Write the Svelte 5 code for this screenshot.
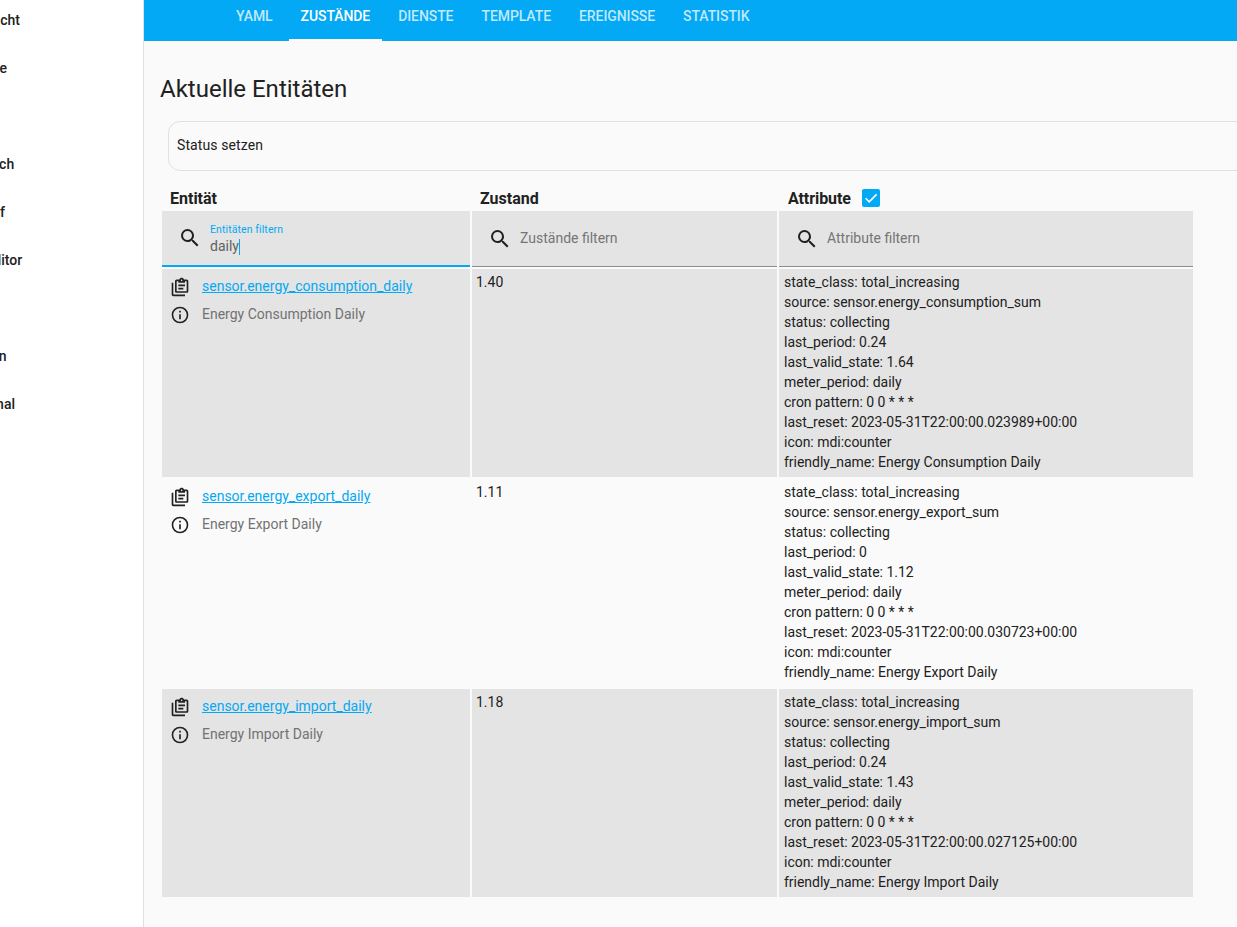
<script lang="ts">
  const navItems = ["Übersicht", "Energie", "", "Logbuch", "Verlauf", "File editor", "", "Medien", "Terminal"];
  const tabs = ["YAML", "Zustände", "Dienste", "Template", "Ereignisse", "Statistik"];

  const magnify = "M9.5,3A6.5,6.5 0 0,1 16,9.5C16,11.11 15.41,12.59 14.44,13.73L14.71,14H15.5L20.5,19L19,20.5L14,15.5V14.71L13.73,14.44C12.59,15.41 11.11,16 9.5,16A6.5,6.5 0 0,1 3,9.5A6.5,6.5 0 0,1 9.5,3M9.5,5C7,5 5,7 5,9.5C5,12 7,14 9.5,14C12,14 14,12 14,9.5C14,7 12,5 9.5,5Z";
  const clipboard = "M4 7V21H18V23H4C2.9 23 2 22.1 2 21V7H4M20 3C21.1 3 22 3.9 22 5V17C22 18.1 21.1 19 20 19H8C6.9 19 6 18.1 6 17V5C6 3.9 6.9 3 8 3H11.18C11.6 1.84 12.7 1 14 1C15.3 1 16.4 1.84 16.82 3H20M14 3C13.45 3 13 3.45 13 4C13 4.55 13.45 5 14 5C14.55 5 15 4.55 15 4C15 3.45 14.55 3 14 3M10 7V5H8V17H20V5H18V7H10M18 9H10V11H18V9M16 13H10V15H16V13Z";
  const info = "M11,9H13V7H11M12,20C7.59,20 4,16.41 4,12C4,7.59 7.59,4 12,4C16.41,4 20,7.59 20,12C20,16.41 16.41,20 12,20M12,2A10,10 0 0,0 2,12A10,10 0 0,0 12,22A10,10 0 0,0 22,12A10,10 0 0,0 12,2M11,17H13V11H11V17Z";

  const rows = [
    {
      id: "sensor.energy_consumption_daily",
      name: "Energy Consumption Daily",
      state: "1.40",
      source: "sensor.energy_consumption_sum",
      lastPeriod: "0.24",
      lastValid: "1.64",
      reset: "2023-05-31T22:00:00.023989+00:00",
    },
    {
      id: "sensor.energy_export_daily",
      name: "Energy Export Daily",
      state: "1.11",
      source: "sensor.energy_export_sum",
      lastPeriod: "0",
      lastValid: "1.12",
      reset: "2023-05-31T22:00:00.030723+00:00",
    },
    {
      id: "sensor.energy_import_daily",
      name: "Energy Import Daily",
      state: "1.18",
      source: "sensor.energy_import_sum",
      lastPeriod: "0.24",
      lastValid: "1.43",
      reset: "2023-05-31T22:00:00.027125+00:00",
    },
  ];

  const attributes = (r) => [
    "state_class: total_increasing",
    `source: ${r.source}`,
    "status: collecting",
    `last_period: ${r.lastPeriod}`,
    `last_valid_state: ${r.lastValid}`,
    "meter_period: daily",
    "cron pattern: 0 0 * * *",
    `last_reset: ${r.reset}`,
    "icon: mdi:counter",
    `friendly_name: ${r.name}`,
  ];
</script>

{#snippet icon(d, size = 24)}
  <svg viewBox="0 0 24 24" width={size} height={size}><path {d} /></svg>
{/snippet}

<div class="page">
  <nav class="sidebar">
    {#each navItems as item}
      <div class="nav-item">{item}</div>
    {/each}
  </nav>

  <main>
    <header>
      {#each tabs as tab, i}
        <div class="tab" class:active={i === 1}>{tab}</div>
      {/each}
    </header>

    <section>
      <h1>Aktuelle Entitäten</h1>
      <div class="card">Status setzen</div>

      <table>
        <colgroup>
          <col style="width: 308px" />
          <col style="width: 305px" />
          <col style="width: 414px" />
        </colgroup>
        <thead>
          <tr class="titles">
            <th>Entität</th>
            <th>Zustand</th>
            <th>
              <span class="attr-title">
                Attribute
                <span class="checkbox">
                  <svg viewBox="0 0 18 18" width="18" height="18">
                    <path d="M3.6 9.3 7.2 12.9 14.6 5.4" />
                  </svg>
                </span>
              </span>
            </th>
          </tr>
          <tr class="filters">
            <td class="focused">
              <div class="filter">
                {@render icon(magnify)}
                <div class="field">
                  <span class="float-label">Entitäten filtern</span>
                  <span class="value">daily<i class="caret"></i></span>
                </div>
              </div>
            </td>
            <td>
              <div class="filter">
                {@render icon(magnify)}
                <span class="placeholder">Zustände filtern</span>
              </div>
            </td>
            <td>
              <div class="filter">
                {@render icon(magnify)}
                <span class="placeholder">Attribute filtern</span>
              </div>
            </td>
          </tr>
        </thead>
        <tbody>
          {#each rows as row}
            <tr class="row">
              <td>
                <div class="entity-line">
                  {@render icon(clipboard, 20)}
                  <a href="#top">{row.id}</a>
                </div>
                <div class="entity-line">
                  {@render icon(info, 20)}
                  <span class="friendly">{row.name}</span>
                </div>
              </td>
              <td class="state">{row.state}</td>
              <td class="attrs">
                {#each attributes(row) as line}
                  <div>{line}</div>
                {/each}
              </td>
            </tr>
          {/each}
        </tbody>
      </table>
    </section>
  </main>
</div>

<style>
  :global(html),
  :global(body) {
    margin: 0;
    height: 100%;
    overflow: hidden;
  }

  .page {
    display: flex;
    height: 927px;
    background: #fafafa;
    color: #212121;
    font-family: Roboto, "Liberation Sans", sans-serif;
    font-size: 14px;
    overflow: hidden;
  }

  .sidebar {
    flex: 0 0 143px;
    background: #fff;
    border-right: 1px solid #e0e0e0;
    overflow: hidden;
  }

  .nav-item {
    height: 48px;
    line-height: 40px;
    margin-left: -40px;
    font-weight: 500;
    white-space: nowrap;
  }

  main {
    flex: 1;
    min-width: 0;
    overflow: hidden;
  }

  header {
    display: flex;
    gap: 4px;
    height: 41px;
    box-sizing: border-box;
    padding-left: 80px;
    background: #03a9f4;
  }

  .tab {
    box-sizing: border-box;
    height: 41px;
    padding: 6px 12px 0;
    line-height: 20px;
    font-weight: 500;
    letter-spacing: -0.08px;
    text-transform: uppercase;
    color: rgba(255, 255, 255, 0.75);
  }

  .tab.active {
    color: #fff;
    border-bottom: 2px solid #fff;
  }

  section {
    padding: 32px 0 0 16px;
  }

  h1 {
    margin: 0;
    font-size: 24px;
    font-weight: 400;
    line-height: 32px;
  }

  .card {
    box-sizing: border-box;
    width: 1200px;
    height: 50px;
    margin: 16px 0 14px 8px;
    padding: 0 8px;
    line-height: 46px;
    letter-spacing: 0.1px;
    border: 1px solid #e0e0e0;
    border-radius: 12px;
  }

  table {
    table-layout: fixed;
    width: 1035px;
    border-collapse: separate;
    border-spacing: 2px;
  }

  th {
    height: 22px;
    padding: 2px 8px 0;
    box-sizing: border-box;
    text-align: left;
    font-size: 16px;
    font-weight: 700;
    line-height: 20px;
  }

  td {
    padding: 0;
    vertical-align: top;
  }

  .attr-title {
    display: flex;
    align-items: center;
    gap: 11px;
    padding-left: 1px;
    letter-spacing: -0.08px;
  }

  .checkbox {
    display: block;
    width: 18px;
    height: 18px;
    border-radius: 2px;
    background: #03a9f4;
    margin-top: -3px;
  }

  .checkbox svg {
    display: block;
  }

  .checkbox path {
    fill: none;
    stroke: #fff;
    stroke-width: 1.6;
  }

  svg {
    flex: none;
    display: block;
    fill: #212121;
  }

  .filters td {
    height: 56px;
    box-sizing: border-box;
    background: #e4e4e4;
    border-bottom: 1px solid #8c8c8c;
    vertical-align: middle;
  }

  .filters td.focused {
    border-bottom: 2px solid #03a9f4;
  }

  .filter {
    display: flex;
    align-items: center;
    gap: 8px;
    padding-left: 16px;
  }

  .placeholder {
    color: #757575;
    line-height: 20px;
    margin-top: -2px;
  }

  .field {
    display: flex;
    flex-direction: column;
    gap: 1px;
    padding-top: 3px;
  }

  .float-label {
    font-size: 10.5px;
    letter-spacing: 0.1px;
    line-height: 12px;
    color: #03a9f4;
  }

  .value {
    line-height: 18px;
    color: #616161;
  }

  .caret {
    display: inline-block;
    width: 1px;
    height: 16px;
    background: #03a9f4;
    vertical-align: -4px;
  }

  .row td {
    height: 208px;
    box-sizing: border-box;
  }

  .row:nth-child(odd) td {
    background: #e4e4e4;
  }

  .row td:first-child {
    padding: 3px 8px 0;
  }

  .entity-line {
    display: flex;
    align-items: center;
    gap: 12px;
    height: 28px;
  }

  .entity-line svg {
    margin-top: 2px;
  }

  a {
    color: #03a9f4;
    text-decoration: underline;
  }

  .friendly {
    color: #727272;
  }

  .state {
    padding: 3px 4px 0;
    line-height: 20px;
  }

  .attrs {
    padding: 3px 5px 0;
    line-height: 20px;
    letter-spacing: -0.02px;
  }
</style>
